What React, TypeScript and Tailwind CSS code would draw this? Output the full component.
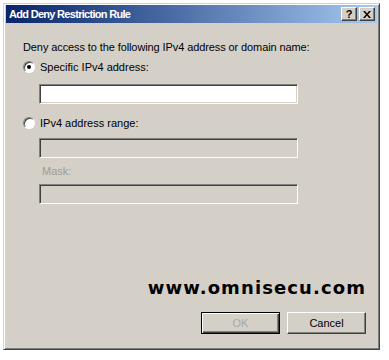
const bevelOut =
  "border border-t-white border-l-white border-r-[#404040] border-b-[#404040] shadow-[inset_-1px_-1px_0_#808080,inset_1px_1px_0_#d4d0c8]";

function Radio({ checked }: { checked?: boolean }) {
  return (
    <span className="relative flex h-[12px] w-[12px] shrink-0 items-center justify-center rounded-full border border-t-[#808080] border-l-[#808080] border-r-white border-b-white bg-white shadow-[inset_1px_1px_0_#404040]">
      {checked && <span className="h-[4px] w-[4px] rounded-full bg-black" />}
    </span>
  );
}

function Field({ disabled }: { disabled?: boolean }) {
  return (
    <div
      className={`ml-[16px] h-[20px] w-[259px] border border-t-[#808080] border-l-[#808080] border-r-white border-b-white shadow-[inset_1px_1px_0_#404040,inset_-1px_-1px_0_#d4d0c8] ${
        disabled ? "bg-[#d4d0c8]" : "bg-white"
      }`}
    />
  );
}

function TitleButton({ children }: { children: React.ReactNode }) {
  return (
    <div
      className={`flex h-[14px] w-[16px] items-center justify-center bg-[#d4d0c8] text-[11px] font-bold leading-none text-black ${bevelOut}`}
    >
      {children}
    </div>
  );
}

export default function App() {
  return (
    <div className="h-[360px] w-[389px] bg-white p-[3px] font-['Liberation_Sans',Arial,sans-serif] text-[11px] text-black">
      <div className="flex h-[347px] w-[377px] flex-col border border-t-[#d4d0c8] border-l-[#d4d0c8] border-r-[#404040] border-b-[#404040] bg-[#d4d0c8] p-[1px] shadow-[inset_1px_1px_0_white,inset_-1px_-1px_0_#808080]">
        <div className="mx-[1px] flex h-[18px] items-center justify-between bg-gradient-to-r from-[#0a246a] to-[#a6caf0] pl-[3px] pr-[2px]">
          <span className="text-[11px] font-bold tracking-[-0.7px] text-white">Add Deny Restriction Rule</span>
          <div className="flex gap-[2px]">
            <TitleButton>?</TitleButton>
            <TitleButton>
              <svg width="8" height="7" viewBox="0 0 8 7">
                <path d="M0 0h2l2 2.5L6 0h2L5 3.5 8 7H6L4 4.5 2 7H0l3-3.5z" fill="black" />
              </svg>
            </TitleButton>
          </div>
        </div>

        <div className="flex flex-1 flex-col pl-[18px] pr-[12px]">
          <div className="mt-[17px] h-[14px] leading-[14px] tracking-[-0.1px]">
            Deny access to the following IPv4 address or domain name:
          </div>
          <div className="mt-[6px] flex h-[14px] items-center gap-[5px] leading-[14px]">
            <Radio checked />
            <span>Specific IPv4 address:</span>
          </div>
          <div className="mt-[10px]">
            <Field />
          </div>
          <div className="mt-[12px] flex h-[14px] items-center gap-[5px] leading-[14px]">
            <Radio />
            <span>IPv4 address range:</span>
          </div>
          <div className="mt-[8px]">
            <Field disabled />
          </div>
          <div className="ml-[19px] mt-[6px] h-[14px] leading-[14px] text-[#a09c94]">Mask:</div>
          <div className="mt-[6px]">
            <Field disabled />
          </div>

          <div className="flex-1" />

          <div className="flex justify-end font-['DejaVu_Sans',Verdana,sans-serif] text-[18px] font-bold leading-[18px] tracking-[1.1px]">
            www.omnisecu.com
          </div>

          <div className="mb-[14px] mt-[15px] flex justify-end gap-[7px]">
            <div className="flex h-[22px] w-[79px] items-center justify-center border border-black bg-[#d4d0c8] text-[#a8a8a8] shadow-[inset_1px_1px_0_white,inset_-1px_-1px_0_#404040,inset_-2px_-2px_0_#808080]">
              OK
            </div>
            <div className={`flex h-[22px] w-[79px] items-center justify-center bg-[#d4d0c8] ${bevelOut}`}>
              Cancel
            </div>
          </div>
        </div>
      </div>
    </div>
  );
}
